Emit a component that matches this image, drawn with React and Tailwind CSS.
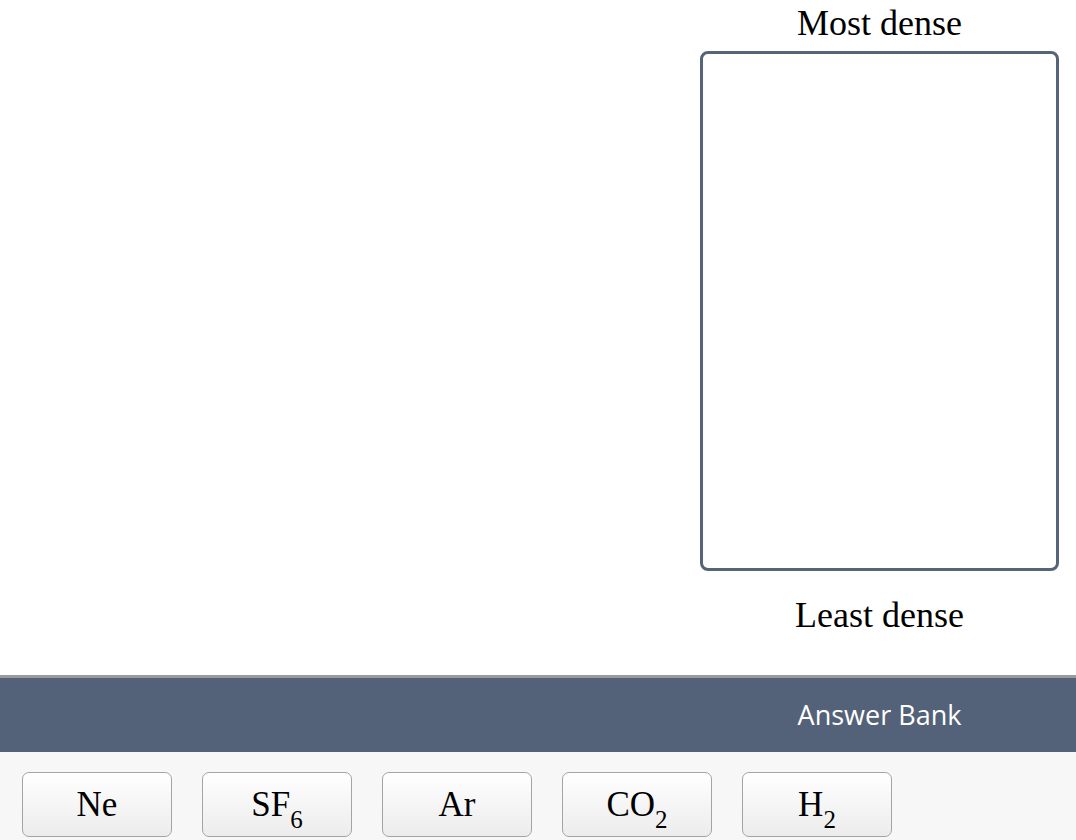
import React from 'react'

const serif = { fontFamily: '"Liberation Serif", "Times New Roman", serif' }

// answer tiles: formula + optional subscript
const answers = [
  { base: 'Ne' },
  { base: 'SF', sub: '6' },
  { base: 'Ar' },
  { base: 'CO', sub: '2' },
  { base: 'H', sub: '2' },
]

function Tile({ base, sub }) {
  return (
    <button
      className="w-[150px] h-[65px] rounded-[7px] border border-[#a4a4a4] bg-gradient-to-b from-white to-[#ececec] text-[35px] leading-none text-black flex items-center justify-center"
      style={serif}
    >
      <span>
        {base}
        {sub && <sub className="text-[25px] bottom-[-12px]">{sub}</sub>}
      </span>
    </button>
  )
}

export default function App() {
  return (
    <div className="w-[1076px] h-[840px] bg-white flex flex-col overflow-hidden">
      {/* ranking area */}
      <div className="h-[675px] flex justify-end pr-[17px]">
        <div className="w-[359px] flex flex-col items-center" style={serif}>
          <div className="pt-[3px] text-[36px] leading-[40px] text-black">Most dense</div>
          <div className="mt-[8px] w-full h-[520px] rounded-[8px] border-[3px] border-[#56647a]" />
          <div className="mt-[24px] text-[36px] leading-[40px] text-black">Least dense</div>
        </div>
      </div>

      {/* answer bank */}
      <div className="h-[3px] bg-[#9a9a9a]" />
      <div className="h-[74px] bg-[#536279] flex justify-end pr-[17px]">
        <div
          className="w-[359px] flex items-center justify-center text-white text-[27px] font-medium"
          style={{ fontFamily: '"Open Sans", "Noto Sans", sans-serif' }}
        >
          Answer Bank
        </div>
      </div>
      <div className="flex-1 bg-[#f7f7f7] flex gap-[30px] pl-[22px] pt-[20px]">
        {answers.map((a) => (
          <Tile key={a.base + (a.sub || '')} {...a} />
        ))}
      </div>
    </div>
  )
}
